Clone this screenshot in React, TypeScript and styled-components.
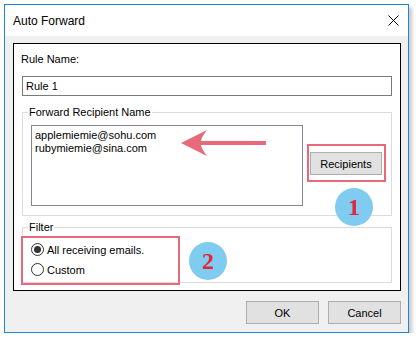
import React from "react";
import styled, { createGlobalStyle } from "styled-components";

const Global = createGlobalStyle`
  html, body { margin: 0; padding: 0; background: #ffffff; }
  body { font-family: "Liberation Sans", Arial, sans-serif; font-size: 11px; color: #000; }
  * { box-sizing: border-box; }
`;

const Page = styled.div`
  padding: 4px 0 0 4px;
`;

const Window = styled.div`
  position: relative;
  width: 405px;
  height: 329px;
  border: 1px solid #1c86d9;
  background: #f0f0f0;
  box-shadow: 3px 3px 4px rgba(0, 0, 0, 0.22);
  display: flex;
  flex-direction: column;
`;

const TitleBar = styled.div`
  height: 31px;
  background: #ffffff;
  display: flex;
  align-items: center;
  justify-content: space-between;
  padding: 0 9px 0 8px;
  font-size: 12px;
`;

const Close = styled.svg`
  display: block;
`;

const Body = styled.div`
  flex: 1;
  display: flex;
  flex-direction: column;
  padding: 7px 7px 0 8px;
`;

const Panel = styled.div`
  position: relative;
  height: 248px;
  border: 1px solid #000;
  background: #ffffff;
  padding: 8px 8px 0 7px;
  display: flex;
  flex-direction: column;
`;

const Label = styled.div`
  height: 14px;
  line-height: 14px;
  margin-bottom: 10px;
`;

const TextInput = styled.div`
  margin-left: 1px;
  height: 20px;
  border: 1px solid #7a7a7a;
  padding: 0 3px;
  line-height: 18px;
`;

const Group = styled.fieldset<{ $h: number }>`
  margin: 0 0 0 1px;
  height: ${(p) => p.$h}px;
  border: 1px solid #dcdcdc;
  padding: 0 4px 0 8px;
  min-width: 0;
`;

const Legend = styled.legend`
  padding: 0 1px;
  margin-left: -3px;
  line-height: 13px;
`;

const RecipientRow = styled.div`
  display: flex;
  align-items: flex-start;
  margin-top: 6px;
`;

const ListBox = styled.div`
  flex: none;
  width: 272px;
  height: 81px;
  border: 1px solid #828790;
  padding: 3px 3px;
  line-height: 13px;
`;

const Highlight = styled.div`
  flex: none;
  margin: 19px 0 0 4px;
  border: 2px solid #e8697a;
  padding: 6px 2px 5px 1px;
`;

const Button = styled.button<{ $w?: number }>`
  width: ${(p) => p.$w ?? 73}px;
  height: 23px;
  background: #e1e1e1;
  border: 1px solid #adadad;
  font-family: "Liberation Sans", Arial, sans-serif;
  font-size: 11px;
  color: #000;
  padding: 0;
  margin: 0;
`;

const FilterList = styled.div`
  display: flex;
  flex-direction: column;
  gap: 7px;
  margin-top: 9px;
`;

const RadioRow = styled.label`
  display: flex;
  align-items: center;
  gap: 3px;
  height: 13px;
`;

const RadioMark = styled.span<{ $on?: boolean }>`
  width: 13px;
  height: 13px;
  border-radius: 50%;
  border: 1px solid #333;
  background: #fff;
  display: flex;
  align-items: center;
  justify-content: center;
  &::after {
    content: "";
    width: 7px;
    height: 7px;
    border-radius: 50%;
    background: ${(p) => (p.$on ? "#333" : "transparent")};
  }
`;

const Spacer = styled.div<{ $h: number }>`
  height: ${(p) => p.$h}px;
  flex: none;
`;

const Footer = styled.div`
  display: flex;
  justify-content: flex-end;
  gap: 9px;
  padding-top: 10px;
  padding-right: 0;
`;

const Badge = styled.div<{ $x: number; $y: number }>`
  position: absolute;
  left: ${(p) => p.$x}px;
  top: ${(p) => p.$y}px;
  width: 38px;
  height: 38px;
  border-radius: 50%;
  background: #7fccf0;
  color: #e5243b;
  font-family: "Liberation Serif", "Times New Roman", serif;
  font-weight: bold;
  font-size: 24px;
  display: flex;
  align-items: center;
  justify-content: center;
`;

const RedBox = styled.div`
  position: absolute;
  left: 16px;
  top: 231px;
  width: 159px;
  height: 49px;
  border: 2px solid #e8697a;
`;

const Arrow = styled.svg`
  position: absolute;
  left: 171px;
  top: 120px;
`;

export default function App() {
  return (
    <>
      <Global />
      <Page>
        <Window>
          <TitleBar>
            <span>Auto Forward</span>
            <Close width="11" height="11" viewBox="0 0 11 11">
              <path d="M0.5 0.5 L10.5 10.5 M10.5 0.5 L0.5 10.5" stroke="#000" strokeWidth="1" />
            </Close>
          </TitleBar>
          <Body>
            <Panel>
              <Label>Rule Name:</Label>
              <TextInput>Rule 1</TextInput>
              <Spacer $h={10} />
              <Group $h={110}>
                <Legend>Forward Recipient Name</Legend>
                <RecipientRow>
                  <ListBox>
                    <div>applemiemie@sohu.com</div>
                    <div>rubymiemie@sina.com</div>
                  </ListBox>
                  <Highlight>
                    <Button $w={72}>Recipients</Button>
                  </Highlight>
                </RecipientRow>
              </Group>
              <Spacer $h={5} />
              <Group $h={62}>
                <Legend>Filter</Legend>
                <FilterList>
                  <RadioRow>
                    <RadioMark $on />
                    All receiving emails.
                  </RadioRow>
                  <RadioRow>
                    <RadioMark />
                    Custom
                  </RadioRow>
                </FilterList>
              </Group>
            </Panel>
            <Footer>
              <Button>OK</Button>
              <Button>Cancel</Button>
            </Footer>
          </Body>
          <Arrow width="92" height="34" viewBox="0 0 92 34">
            <path
              d="M5 18 L31 5 Q25 13 25 16 L90 16 L90 20 L25 20 Q25 23 31 31 Z"
              fill="#e8697a"
            />
          </Arrow>
          <RedBox />
          <Badge $x={330} $y={183}>1</Badge>
          <Badge $x={184} $y={237}>2</Badge>
        </Window>
      </Page>
    </>
  );
}
